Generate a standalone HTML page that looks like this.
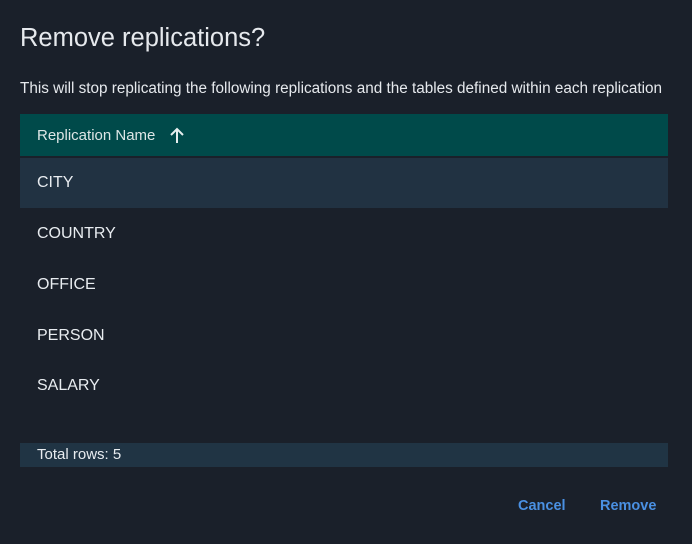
<!DOCTYPE html>
<html><head><style>
body{margin:0;width:692px;height:544px;background:#1a202a;font-family:"Liberation Sans",sans-serif;color:#e8ecf0;position:relative;overflow:hidden}
.a{position:absolute}
h1{position:absolute;left:20px;top:24px;margin:0;font-size:25.5px;font-weight:normal;color:#e6e9ed}
.sub{left:20px;top:80px;font-size:15.3px;color:#e6e9ed;white-space:nowrap}
.hd{left:20px;top:114px;width:648px;height:42px;background:#004a4a}
.hd span{position:absolute;left:17px;top:13px;font-size:15px;color:#dde6e6}
.row{left:20px;width:648px;height:50px;font-size:16px}
.row span{position:absolute;left:17px;top:16px}
.ft{left:20px;top:443px;width:648px;height:24px;background:#203444;font-size:15px}
.ft span{position:absolute;left:17px;top:3px}
.btn{top:498px;font-size:14.5px;font-weight:bold;color:#4a90e2}
</style></head><body>
<h1>Remove replications?</h1>
<div class="a sub">This will stop replicating the following replications and the tables defined within each replication</div>
<div class="a hd"><span>Replication Name</span>
<svg class="a" style="left:148px;top:12px" width="18" height="18" viewBox="0 0 18 18"><path d="M9 17V3M3 9l6-6 6 6" stroke="#e6eeee" stroke-width="2" fill="none"/></svg></div>
<div class="a row" style="top:158px;background:#213242"><span>CITY</span></div>
<div class="a row" style="top:209px"><span>COUNTRY</span></div>
<div class="a row" style="top:260px"><span>OFFICE</span></div>
<div class="a row" style="top:311px"><span>PERSON</span></div>
<div class="a row" style="top:361px"><span>SALARY</span></div>
<div class="a ft"><span>Total rows: 5</span></div>
<div class="a btn" style="left:518px">Cancel</div>
<div class="a btn" style="left:600px">Remove</div>
</body></html>
